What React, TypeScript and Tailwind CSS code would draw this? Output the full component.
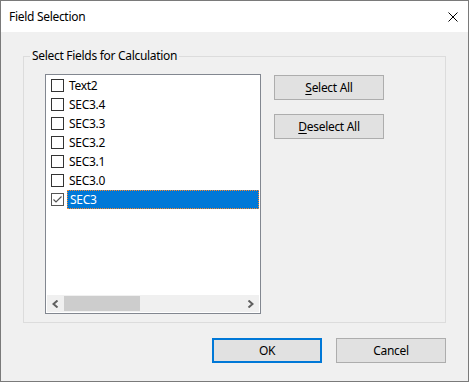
import { FC } from 'react';

const fields = ['Text2', 'SEC3.4', 'SEC3.3', 'SEC3.2', 'SEC3.1', 'SEC3.0', 'SEC3'];

const CheckBox: FC<{ checked: boolean }> = ({ checked }) => (
  <span
    className={`w-[13px] h-[13px] shrink-0 border bg-white flex items-center justify-center ${
      checked ? 'border-[#555]' : 'border-[#333]'
    }`}
  >
    {checked && (
      <svg width="11" height="11" viewBox="0 0 11 11">
        <path d="M1.5 5.5 L4 8 L9.5 2.5" fill="none" stroke="#555" strokeWidth="1.2" />
      </svg>
    )}
  </span>
);

const Button: FC<{ label: string; mnemonic?: boolean; primary?: boolean }> = ({ label, mnemonic, primary }) => (
  <button
    className={`w-[110px] h-[25px] bg-[#e1e1e1] flex items-center justify-center text-black ${
      primary ? 'border-2 border-[#0078d7]' : 'border border-[#adadad]'
    }`}
  >
    {mnemonic ? (
      <span>
        <span className="underline underline-offset-2">{label[0]}</span>
        {label.slice(1)}
      </span>
    ) : (
      label
    )}
  </button>
);

export default function App() {
  const selected = 'SEC3';

  return (
    <div className="w-[469px] h-[382px] border border-[#7a7a7a] bg-[#f0f0f0] flex flex-col font-['Noto_Sans',sans-serif] text-[12px] tracking-[-0.3px] text-black">
      {/* title bar */}
      <div className="h-[31px] bg-white flex items-center justify-between pl-[8px] pr-[10px]">
        <span>Field Selection</span>
        <svg width="10" height="10" viewBox="0 0 10 10">
          <path d="M0.5 0.5 L9.5 9.5 M9.5 0.5 L0.5 9.5" stroke="#000" strokeWidth="1" />
        </svg>
      </div>

      <div className="flex flex-col px-[22px] pt-[16px]">
        <fieldset className="border border-[#dcdcdc] pl-[6px] pr-0 pt-[10px] pb-[8px]">
          <legend className="px-[2px] leading-[16px]">Select Fields for Calculation</legend>
          <div className="flex items-start gap-[13px] pl-[15px]">
            {/* list */}
            <div className="w-[216px] h-[240px] border border-[#828790] bg-white p-[1px] flex flex-col">
              <div className="flex-1 flex flex-col">
                {fields.map((f) => {
                  const isSel = f === selected;
                  return (
                    <div key={f} className="h-[19px] flex items-center pl-[4px]">
                      <CheckBox checked={isSel} />
                      <span
                        className={`ml-[3px] h-[19px] flex items-center px-[2px] ${
                          isSel
                            ? 'flex-1 bg-[#0078d7] text-white border border-dotted border-[#ff8728]'
                            : ''
                        }`}
                      >
                        {f}
                      </span>
                    </div>
                  );
                })}
              </div>
              {/* horizontal scrollbar */}
              <div className="h-[17px] bg-[#f0f0f0] flex items-stretch">
                <div className="w-[17px] flex items-center justify-center">
                  <svg width="7" height="8" viewBox="0 0 7 8">
                    <path d="M5.5 0.5 L1.5 4 L5.5 7.5" fill="none" stroke="#606060" strokeWidth="2" />
                  </svg>
                </div>
                <div className="w-[76px] bg-[#cdcdcd] my-[1px]" />
                <div className="flex-1" />
                <div className="w-[17px] flex items-center justify-center">
                  <svg width="7" height="8" viewBox="0 0 7 8">
                    <path d="M1.5 0.5 L5.5 4 L1.5 7.5" fill="none" stroke="#606060" strokeWidth="2" />
                  </svg>
                </div>
              </div>
            </div>

            {/* side buttons */}
            <div className="flex flex-col gap-[14px] mt-[1px]">
              <Button label="Select All" mnemonic />
              <Button label="Deselect All" mnemonic />
            </div>
          </div>
        </fieldset>

        <div className="flex justify-end gap-[14px] mt-[15px]">
          <Button label="OK" primary />
          <Button label="Cancel" />
        </div>
      </div>
    </div>
  );
}
